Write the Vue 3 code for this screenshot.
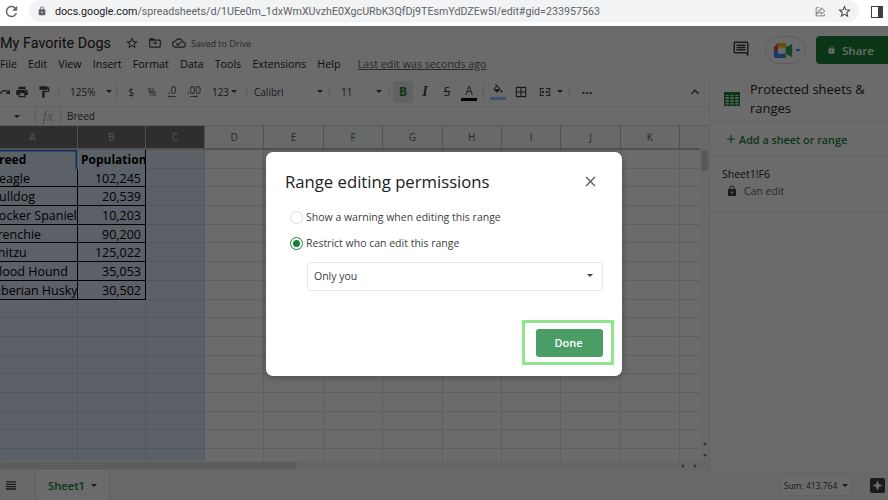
<template>
  <div class="page">
    <!-- browser bar -->
    <div class="chrome">
      <svg class="reload" viewBox="0 0 24 24"><path d="M17.65 6.35C16.2 4.9 14.21 4 12 4c-4.42 0-7.99 3.58-7.99 8s3.57 8 7.99 8c3.73 0 6.84-2.55 7.73-6h-2.08c-.82 2.33-3.04 4-5.65 4-3.31 0-6-2.69-6-6s2.69-6 6-6c1.66 0 3.14.69 4.22 1.78L13 11h7V4l-2.35 2.35z"/></svg>
      <div class="omnibox">
        <svg class="url-lock" viewBox="0 0 24 24"><path :d="lockPath"/></svg>
        <span class="url"><b>docs.google.com</b>/spreadsheets/d/1UEe0m_1dxWmXUvzhE0XgcURbK3QfDj9TEsmYdDZEw5I/edit#gid=233957563</span>
        <svg class="omni-share" viewBox="0 0 24 24"><path d="M13 5l7 6-7 6v-3.6c-3.6 0-6 1-8 3.6.6-4 3-7.400 8-8z" fill="none" stroke="#5f6368" stroke-width="1.6" stroke-linejoin="round"/><path d="M9 5H4v15h15v-4" fill="none" stroke="#5f6368" stroke-width="1.4"/></svg>
        <svg class="omni-star" viewBox="0 0 24 24"><path :d="starPath"/></svg>
      </div>
      <div class="panel-toggle"><span></span></div>
    </div>

    <!-- sheets app -->
    <div class="app">
      <header class="head">
        <div class="head-left">
          <div class="title-row">
            <span class="doc-title">My Favorite Dogs</span>
            <svg class="ic14 star" viewBox="0 0 24 24"><path :d="starPath"/></svg>
            <svg class="ic14 folder" viewBox="0 0 24 24"><path d="M20 6h-8l-2-2H4c-1.1 0-2 .9-2 2v12c0 1.1.9 2 2 2h16c1.1 0 2-.9 2-2V8c0-1.1-.9-2-2-2zm0 12H4V8h16v10zm-8-9v2H8v2h4v2l4-3z"/></svg>
            <svg class="ic14 cloud" viewBox="0 0 24 24"><path d="M19.35 10.04A7.49 7.49 0 0 0 12 4C9.11 4 6.6 5.64 5.35 8.04A5.994 5.994 0 0 0 0 14c0 3.31 2.69 6 6 6h13c2.76 0 5-2.24 5-5 0-2.64-2.05-4.78-4.65-4.96zM19 18H6c-2.21 0-4-1.79-4-4 0-2.05 1.53-3.76 3.56-3.97l1.07-.11.5-.95A5.469 5.469 0 0 1 12 6c2.62 0 4.88 1.86 5.39 4.43l.3 1.5 1.53.11A2.98 2.98 0 0 1 22 15c0 1.65-1.35 3-3 3zm-9-3.82l-2.09-2.09L6.5 13.5 10 17l6.01-6.01-1.41-1.41z"/></svg>
            <span class="saved">Saved to Drive</span>
          </div>
          <nav class="menu">
            <span v-for="m in menus" :key="m">{{ m }}</span>
            <span class="last-edit">Last edit was seconds ago</span>
          </nav>
        </div>
        <div class="head-right">
          <svg class="comment" viewBox="0 0 24 24"><path d="M20 2H4c-1.1 0-2 .9-2 2v12c0 1.1.9 2 2 2h14l4 4V4c0-1.1-.9-2-2-2zm0 15.170L18.830 16H4V4h16v13.170zM6 12h12v2H6zm0-3h12v2H6zm0-3h12v2H6z"/></svg>
          <div class="meet">
            <svg class="meet-logo" viewBox="0 0 24 20">
              <path d="M1 6l5-5h9v5H6v4H1z" fill="#ea4335"/>
              <path d="M6 1h9v5H6z" fill="#fbbc04"/>
              <path d="M1 10h5v4h9v5H4c-1.700 0-3-1.300-3-3z" fill="#4285f4"/>
              <path d="M15 14v5h-2v-5zM15 6l8-4v16l-8-4z" fill="#34a853"/>
              <path d="M15 1v18h-3l3-1z" fill="#188038"/>
            </svg>
            <i class="caret caret-blue"></i>
          </div>
          <button class="share">
            <svg viewBox="0 0 24 24"><path :d="lockPath"/></svg>
            Share
          </button>
        </div>
      </header>

      <div class="toolbar">
        <span class="slot s-redo"><svg class="ic12" viewBox="0 0 24 24"><path d="M18.400 10.600C16.550 8.990 14.150 8 11.500 8c-4.650 0-8.580 3.030-9.960 7.220L3.900 16c1.050-3.190 4.050-5.500 7.600-5.500 1.950 0 3.730.72 5.120 1.880L13 16h9V7l-3.600 3.600z"/></svg></span>
        <span class="slot"><svg class="ic14" viewBox="0 0 24 24"><path d="M19 8H5c-1.660 0-3 1.340-3 3v6h4v4h12v-4h4v-6c0-1.660-1.340-3-3-3zm-3 11H8v-5h8v5zm3-7c-.55 0-1-.45-1-1s.45-1 1-1 1 .45 1 1-.45 1-1 1zm-1-9H6v4h12V3z"/></svg></span>
        <span class="slot"><svg class="ic14" viewBox="0 0 24 24"><path d="M18 4V3c0-.55-.45-1-1-1H5c-.55 0-1 .45-1 1v4c0 .55.45 1 1 1h12c.55 0 1-.45 1-1V6h1v4H9v11c0 .55.45 1 1 1h2c.55 0 1-.45 1-1v-9h8V4h-3z"/></svg></span>
        <span class="sep"></span>
        <span class="slot s-zoom">125%<i class="caret"></i></span>
        <span class="sep"></span>
        <span class="slot">$</span>
        <span class="slot s-pct">%</span>
        <span class="slot s-pct dec">.0<svg class="dec-arrow" viewBox="0 0 10 4"><path d="M0 2l2-2v1.500h8v1H2V4z"/></svg></span>
        <span class="slot s-dec dec">.00<svg class="dec-arrow" viewBox="0 0 10 4"><path d="M10 2L8 0v1.500H0v1h8V4z"/></svg></span>
        <span class="slot s-num">123<i class="caret"></i></span>
        <span class="sep"></span>
        <span class="slot s-font">Calibri<i class="caret"></i></span>
        <span class="sep"></span>
        <span class="slot s-size">11<i class="caret"></i></span>
        <span class="sep"></span>
        <span class="slot bold">B</span>
        <span class="slot italic">I</span>
        <span class="slot strike">S</span>
        <span class="slot color-a">A</span>
        <span class="sep"></span>
        <span class="slot fill">
          <svg class="ic12" viewBox="0 0 24 24"><path d="M16.560 8.940L7.620 0 6.210 1.410l2.380 2.380-5.150 5.150c-.59.59-.59 1.540 0 2.120l5.500 5.500c.29.29.68.44 1.060.44s.77-.15 1.060-.44l5.500-5.500c.59-.58.59-1.530 0-2.120zM5.210 10L10 5.210 14.790 10H5.210zM19 11.500s-2 2.170-2 3.500c0 1.100.9 2 2 2s2-.9 2-2c0-1.330-2-3.500-2-3.500z"/></svg>
        </span>
        <span class="slot s-wide"><svg class="ic14" viewBox="0 0 24 24"><path d="M3 3v18h18V3H3zm8 16H5v-6h6v6zm0-8H5V5h6v6zm8 8h-6v-6h6v6zm0-8h-6V5h6v6z"/></svg></span>
        <span class="slot s-wide"><svg class="ic14" viewBox="0 0 24 24"><path d="M3 5h7v2H5v3H3zM14 5h7v5h-2V7h-5zM3 14h2v3h5v2H3zM19 14h2v5h-7v-2h5zM3 11h5V9l3 3-3 3v-2H3zM21 13h-5v2l-3-3 3-3v2h5z"/></svg></span>
        <i class="caret merge-caret"></i>
        <span class="sep"></span>
        <span class="slot dots">···</span>
        <span class="spacer"></span>
        <svg class="ic16 collapse" viewBox="0 0 24 24"><path d="M12 8l-6 6 1.410 1.410L12 10.830l4.590 4.580L18 14z"/></svg>
      </div>

      <div class="formula">
        <i class="caret name-caret"></i>
        <span class="sep"></span>
        <span class="fx">fx</span>
        <span class="sep"></span>
        <span class="formula-text">Breed</span>
      </div>

      <div class="main">
        <div class="sheet-wrap">
          <div class="sheet-row">
            <div class="viewport">
              <div class="sheet">
                <div v-for="(c, i) in cols" :key="c" class="col-head" :class="{ picked: i < 3 }">{{ c }}</div>
                <template v-for="(row, r) in rows" :key="r">
                  <div
                    v-for="(c, i) in cols"
                    :key="c + r"
                    class="cell"
                    :class="{
                      picked: i < 3,
                      boxed: i < 2 && r < 8 && !(i === 0 && r === 0),
                      active: i === 0 && r === 0,
                      head: i < 2 && r === 0,
                      num: i === 1 && r > 0
                    }"
                  >{{ i === 0 ? row[0] : i === 1 ? row[1] : '' }}</div>
                </template>
              </div>
            </div>
            <div class="v-scroll">
              <span class="v-thumb"></span>
              <span class="v-spacer"></span>
              <i class="arrow-up"></i>
              <i class="arrow-down"></i>
            </div>
          </div>
          <div class="h-scroll">
            <span class="h-thumb"></span>
            <i class="arrow-left"></i>
            <i class="arrow-right"></i>
          </div>
        </div>

        <aside class="side">
          <div class="side-head">
            <svg class="sheets-logo" viewBox="0 0 16 14"><path d="M.75.75h14.500v12.500H.75zM.75 4.500h14.500M.75 7.500h14.500M.75 10.500h14.500M5.500 2.500v10.700M10.500 2.500v10.700" fill="none" stroke="#188038" stroke-width="1.500"/><path d="M0 0h16v3H0z" fill="#188038"/></svg>
            <span>Protected sheets &amp; ranges</span>
          </div>
          <div class="side-add">
            <svg viewBox="0 0 24 24"><path d="M19 13h-6v6h-2v-6H5v-2h6V5h2v6h6v2z"/></svg>
            Add a sheet or range
          </div>
          <div class="side-item">
            <div class="range-name">Sheet1!F6</div>
            <div class="range-perm">
              <svg viewBox="0 0 24 24"><path :d="lockPath"/></svg>
              Can edit
            </div>
          </div>
        </aside>
      </div>

      <footer class="tabs">
        <svg class="all-sheets" viewBox="0 0 12 10"><path d="M0 0h12v1.500H0zM0 2.800h12v1.500H0zM0 5.600h12v1.500H0zM0 8.400h12V10H0z"/></svg>
        <div class="tab">Sheet1<i class="caret tab-caret"></i></div>
        <span class="spacer"></span>
        <div class="sum">Sum: 413,764<i class="caret"></i></div>
        <div class="explore"><svg viewBox="0 0 24 24"><path d="M12 4l2.500 5.500L20 12l-5.500 2.500L12 20l-2.500-5.500L4 12l5.500-2.500z" fill="#fff"/></svg></div>
      </footer>
    </div>

    <!-- dialog -->
    <div class="scrim">
      <div class="dialog">
        <div class="dialog-head">
          <h2>Range editing permissions</h2>
          <svg class="close" viewBox="0 0 24 24"><path d="M19 6.410L17.590 5 12 10.590 6.410 5 5 6.410 10.590 12 5 17.590 6.410 19 12 13.410 17.590 19 19 17.590 13.410 12z"/></svg>
        </div>
        <label class="radio-row"><span class="radio"></span>Show a warning when editing this range</label>
        <label class="radio-row"><span class="radio on"></span>Restrict who can edit this range</label>
        <div class="select">Only you<i class="caret"></i></div>
        <div class="dialog-foot">
          <div class="done-wrap">
            <button class="done">Done</button>
            <span class="marker"></span>
          </div>
        </div>
      </div>
    </div>
  </div>
</template>

<script setup>
const lockPath = 'M18 8h-1V6c0-2.76-2.24-5-5-5S7 3.24 7 6v2H6c-1.100 0-2 .9-2 2v10c0 1.100.9 2 2 2h12c1.100 0 2-.9 2-2V10c0-1.100-.9-2-2-2zm-6 9c-1.100 0-2-.9-2-2s.9-2 2-2 2 .9 2 2-.9 2-2 2zm3.100-9H8.900V6c0-1.710 1.390-3.100 3.100-3.100 1.710 0 3.100 1.390 3.100 3.100v2z'
const starPath = 'M22 9.240l-7.190-.62L12 2 9.190 8.630 2 9.240l5.460 4.730L5.820 21 12 17.270 18.180 21l-1.630-7.030L22 9.240zM12 15.400l-3.760 2.270 1-4.280-3.320-2.880 4.380-.38L12 6.100l1.710 4.040 4.380.38-3.320 2.880 1 4.280L12 15.400z'

const menus = ['File', 'Edit', 'View', 'Insert', 'Format', 'Data', 'Tools', 'Extensions', 'Help']
const cols = ['A', 'B', 'C', 'D', 'E', 'F', 'G', 'H', 'I', 'J', 'K', '']

const table = [
  ['Breed', 'Population'],
  ['Beagle', '102,245'],
  ['Bulldog', '20,539'],
  ['Cocker Spaniel', '10,203'],
  ['Frenchie', '90,200'],
  ['Shitzu', '125,022'],
  ['Blood Hound', '35,053'],
  ['Siberian Husky', '30,502']
]
const rows = [...table, ...Array.from({ length: 9 }, () => ['', ''])]
</script>

<style>
html, body { margin: 0; height: 100%; overflow: hidden; }
</style>

<style scoped>
.page {
  position: relative; width: 888px; height: 500px; overflow: hidden;
  display: flex; flex-direction: column; background: #fff; color: #3c4043;
  font-family: "Open Sans", "Liberation Sans", sans-serif;
}
svg { fill: currentColor; display: block; flex: none; }
.ic12 { width: 12px; height: 12px; }
.ic14 { width: 14px; height: 14px; }
.ic16 { width: 16px; height: 16px; }
.caret {
  display: inline-block; width: 0; height: 0; flex: none;
  border-left: 3.5px solid transparent; border-right: 3.5px solid transparent;
  border-top: 3.5px solid currentColor;
}

/* browser bar */
.chrome { height: 26px; flex: none; display: flex; align-items: flex-start; background: #fff; }
.reload { width: 17px; height: 17px; margin: 3px 0 0 3px; color: #5f6368; }
.omnibox {
  width: 830px; height: 22px; margin-left: 9px; border-radius: 11px; background: #f1f3f4;
  display: flex; align-items: center; box-sizing: border-box; padding-left: 8px;
}
.url-lock { width: 10px; height: 10px; color: #5f6368; }
.url { margin-left: 8px; font-family: Roboto, sans-serif; font-size: 10.700px; color: #5f6368; white-space: nowrap; flex: 1; }
.url b { font-weight: 400; color: #202124; }
.omni-share { width: 13px; height: 13px; }
.omni-star { width: 15px; height: 15px; margin: 0 7px 0 10px; color: #3c4043; }
.panel-toggle {
  width: 10px; height: 10px; margin: 6px 0 0 12px; border: 1.5px solid #3c4043;
  display: flex; justify-content: flex-end;
}
.panel-toggle span { width: 4px; background: #3c4043; }

/* app */
.app { flex: 1; min-height: 0; display: flex; flex-direction: column; }
.head { height: 51px; flex: none; display: flex; justify-content: space-between; }
.title-row { display: flex; align-items: center; height: 34px; box-sizing: border-box; }
.doc-title { font-family: Roboto, sans-serif; font-size: 14.400px; color: #202124; width: 125px; white-space: nowrap; }
.star { color: #444; }
.folder { margin-left: 9px; }
.cloud { margin-left: 10px; }
.saved { font-size: 9px; color: #5f6368; margin-left: 5px; }
.menu { display: flex; align-items: center; height: 12px; margin-top: -2px; font-size: 10.7px; color: #202124; gap: 11.2px; white-space: nowrap; }
.last-edit { margin-left: 6px; color: #5f6368; text-decoration: underline; }
.head-right { display: flex; align-items: center; height: 50px; margin-top: -1px; }
.comment { width: 18px; height: 18px; color: #444; margin-right: 15px; margin-top: -2px; }
.meet {
  width: 41px; height: 28px; box-sizing: border-box; border: 1px solid #e0e0e0; border-radius: 14px;
  display: flex; align-items: center; padding-left: 7px; gap: 2px; margin-right: 10px;
}
.meet-logo { width: 20px; height: 17px; }
.caret-blue { color: #4285f4; }
.share {
  width: 72px; height: 28px; border: 0; border-radius: 4px 0 0 4px; background: #188038; color: #fff;
  display: flex; align-items: center; gap: 6px; padding: 0 0 0 11px; font: 600 11.5px "Open Sans", sans-serif;
}
.share svg { width: 9px; height: 10px; }

.toolbar {
  height: 30px; flex: none; display: flex; align-items: center; font-size: 10px; color: #5f6368;
  border-bottom: 1px solid #e8eaed; box-sizing: border-box; position: relative;
}
.slot {
  width: 22px; height: 22px; flex: none; display: flex; align-items: center; justify-content: center;
  box-sizing: border-box; gap: 2px; color: #3c4043; position: relative;
}
.slot.s-redo { width: 11px; justify-content: flex-end; }
.sep { width: 1px; height: 14px; background: #dadce0; margin: 0 3px; flex: none; }
.s-zoom { width: 51px; justify-content: flex-start; padding-left: 8px; gap: 11px; }
.s-pct { width: 20px; }
.s-dec { width: 24px; }
.dec { flex-direction: column; gap: 0; line-height: 10px; }
.dec-arrow { width: 8px; height: 3px; }
.s-num { width: 37px; }
.s-font { width: 76px; justify-content: flex-start; padding-left: 4px; gap: 33px; }
.s-size { width: 53px; justify-content: flex-start; padding-left: 8px; gap: 24px; }
.bold { font-weight: 700; font-size: 12px; color: #188038; background: #e8eaed; border-radius: 3px; width: 20px; margin-right: 1px; }
.italic { font-style: italic; font-family: "Liberation Serif", serif; font-size: 14px; font-weight: 700; }
.strike { text-decoration: line-through; font-size: 12px; }
.color-a { font-size: 12px; padding-bottom: 3px; }
.color-a::after { content: ""; position: absolute; left: 3px; right: 3px; bottom: 2px; height: 3px; background: #000; }
.fill::after { content: ""; position: absolute; left: 3px; right: 3px; bottom: 3px; height: 2.500px; background: #a4c2f4; }
.fill svg { margin-bottom: 3px; }
.s-wide { width: 24px; }
.merge-caret { margin: 0 3px 0 0; color: #3c4043; }
.dots { font-weight: 700; font-size: 13px; width: 28px; }
.spacer { flex: 1; }
.collapse { color: #3c4043; margin-right: 185px; }

.formula {
  height: 19px; flex: none; display: flex; align-items: center; font-size: 10px; color: #3c4043;
  border-bottom: 1px solid #dadce0; box-sizing: border-box;
}
.name-caret { margin-left: 14px; margin-right: 12px; }
.fx { font: italic 15px "Liberation Serif", serif; color: #bbb; width: 18px; text-align: center; }
.formula-text { margin-left: 3px; }

.main { flex: 1; min-height: 0; display: flex; }
.sheet-wrap { width: 709px; flex: none; display: flex; flex-direction: column; }
.sheet-row { flex: 1; min-height: 0; display: flex; }
.viewport { width: 700px; overflow: hidden; flex: none; }
.sheet {
  margin-left: -12px; display: grid;
  grid-template-columns: 90px 68px 59px repeat(8, 59.4px) 60px;
  grid-template-rows: 24px; grid-auto-rows: 18.700px;
  font-size: 12.500px; color: #000;
}
.col-head {
  background: #f8f9fa; color: #5f6368; font-size: 10px; display: flex; align-items: center; justify-content: center;
  border-right: 1px solid #c0c0c0; border-bottom: 2px solid #c0c0c0; box-sizing: border-box;
}
.col-head.picked { background: #6e6e6e; color: #ccc; }
.cell {
  border-right: 1px solid #e2e3e3; border-bottom: 1px solid #e2e3e3; box-sizing: border-box;
  padding: 1px 3px 0; line-height: 18px; white-space: nowrap; overflow: hidden;
}
.cell.picked { background: #dce5f5; border-color: #c8d0df; }
.cell.boxed { border-right: 1.500px solid #000; border-bottom: 1.500px solid #000; }
.cell.active { box-shadow: inset 0 0 0 1.500px #1a73e8; }
.cell.head { font-weight: 700; font-size: 12px; }
.cell.num { text-align: right; padding-right: 4px; }

.v-scroll { width: 9px; flex: none; display: flex; flex-direction: column; align-items: center; background: #f8f9fa; color: #777; }
.v-thumb { width: 7px; height: 21px; margin-top: 24px; border-radius: 4px; background: #d4d4d4; }
.v-spacer { flex: 1; }
.arrow-up, .arrow-down { width: 0; height: 0; border-left: 2.500px solid transparent; border-right: 2.500px solid transparent; }
.arrow-up { border-bottom: 3px solid currentColor; margin-bottom: 9px; }
.arrow-down { border-top: 3px solid currentColor; margin-bottom: 4px; }
.h-scroll { height: 9px; flex: none; background: #f1f3f4; display: flex; align-items: center; color: #777; }
.h-thumb { width: 297px; height: 7px; border-radius: 4px; background: #dcdcdc; margin-right: auto; }
.arrow-left, .arrow-right { width: 0; height: 0; border-top: 2.500px solid transparent; border-bottom: 2.500px solid transparent; }
.arrow-left { border-right: 3px solid currentColor; margin-right: 10px; }
.arrow-right { border-left: 3px solid currentColor; margin-right: 12px; }

.side { flex: 1; border-left: 1px solid #e8eaed; margin-top: -50px; background: #fff; color: #3c4043; position: relative; }
.side-head { height: 46px; display: flex; align-items: center; padding-left: 14px; gap: 10px; font-size: 13px; line-height: 19px; color: #202124; border-bottom: 1px solid #e8eaed; box-sizing: border-box; }
.side-head span { width: 120px; }
.sheets-logo { width: 16px; height: 14px; }
.side-add { height: 35px; display: flex; align-items: center; padding-left: 14px; font-size: 10.800px; font-weight: 600; color: #188038; border-bottom: 1px solid #e8eaed; box-sizing: border-box; }
.side-add svg { width: 14px; height: 14px; margin-right: 1px; }
.side-item { padding: 10px 0 0 12px; height: 56px; box-sizing: border-box; border-bottom: 1px solid #e8eaed; }
.range-name { font-size: 10.500px; font-weight: 500; line-height: 14px; color: #202124; }
.range-perm { display: flex; align-items: center; margin-top: 3px; padding-left: 4px; font-size: 10.500px; color: #5f6368; gap: 6px; }
.range-perm svg { width: 12px; height: 12px; color: #3c4043; }

.tabs { height: 30px; flex: none; display: flex; align-items: center; background: #f8f9fa; font-size: 10px; }
.all-sheets { width: 10px; height: 9px; margin-left: 6px; color: #3c4043; }
.tab {
  width: 75px; height: 30px; margin-left: 19px; display: flex; align-items: center; box-sizing: border-box; padding-left: 12px;
  background: #fff; font-size: 11.200px; font-weight: 600; color: #188038; gap: 6px; border-left: 1px solid #e0e0e0; border-right: 1px solid #e0e0e0;
}
.tab-caret { color: #3c4043; }
.sum { width: 72px; height: 21px; display: flex; align-items: center; justify-content: center; gap: 5px; background: #fff; border: 1px solid #eee; box-sizing: border-box; font-size: 8.500px; white-space: nowrap; color: #3c4043; }
.explore { width: 15px; height: 15px; margin: 0 3px 0 18px; background: #3c4043; border-radius: 2px; }
.explore svg { width: 15px; height: 15px; }

/* dialog */
.scrim {
  position: absolute; left: 0; right: 0; top: 26px; bottom: 0; padding-top: 2px; background: rgba(0, 0, 0, 0.58);
  display: flex; align-items: center; justify-content: center;
}
.dialog {
  width: 356px; height: 224px; background: #fff; border-radius: 7px; box-sizing: border-box; padding: 0 19px;
  display: flex; flex-direction: column; box-shadow: 0 1px 6px rgba(0, 0, 0, .3);
}
.dialog-head { height: 52px; flex: none; display: flex; align-items: center; justify-content: space-between; padding-top: 6px; box-sizing: border-box; }
h2 { margin: 0; font-weight: 400; font-size: 16.700px; color: #202124; white-space: nowrap; }
.close { width: 17px; height: 17px; color: #5f6368; margin-right: 4px; }
.radio-row { height: 26px; display: flex; align-items: center; gap: 3px; font-size: 10.500px; color: #3c4043; padding-left: 5px; }
.radio { width: 13px; height: 13px; border: 1px solid #dadce0; border-radius: 50%; box-sizing: border-box; display: flex; align-items: center; justify-content: center; }
.radio.on { border: 1.500px solid #188038; }
.radio.on::after { content: ""; width: 7px; height: 7px; border-radius: 50%; background: #188038; }
.select {
  width: 296px; height: 29px; margin: 6px 0 0 22px; box-sizing: border-box; border: 1px solid #e5e7ea; border-radius: 3px;
  display: flex; align-items: center; justify-content: space-between; padding: 0 9px 2px 6px; font-size: 10.500px; color: #3c4043; flex: none;
}
.dialog-foot { flex: 1; display: flex; justify-content: flex-end; align-items: flex-start; padding-top: 38px; }
.done-wrap { position: relative; }
.done { display: block; width: 67px; height: 28px; border: 0; border-radius: 3px; padding: 0 2px 2px 0; background: #4a9d64; color: #fff; font: 600 11px "Open Sans", sans-serif; }
.marker { position: absolute; left: -14px; right: -11px; top: -9px; bottom: -8px; border: 3px solid #8ee58b; }
</style>
